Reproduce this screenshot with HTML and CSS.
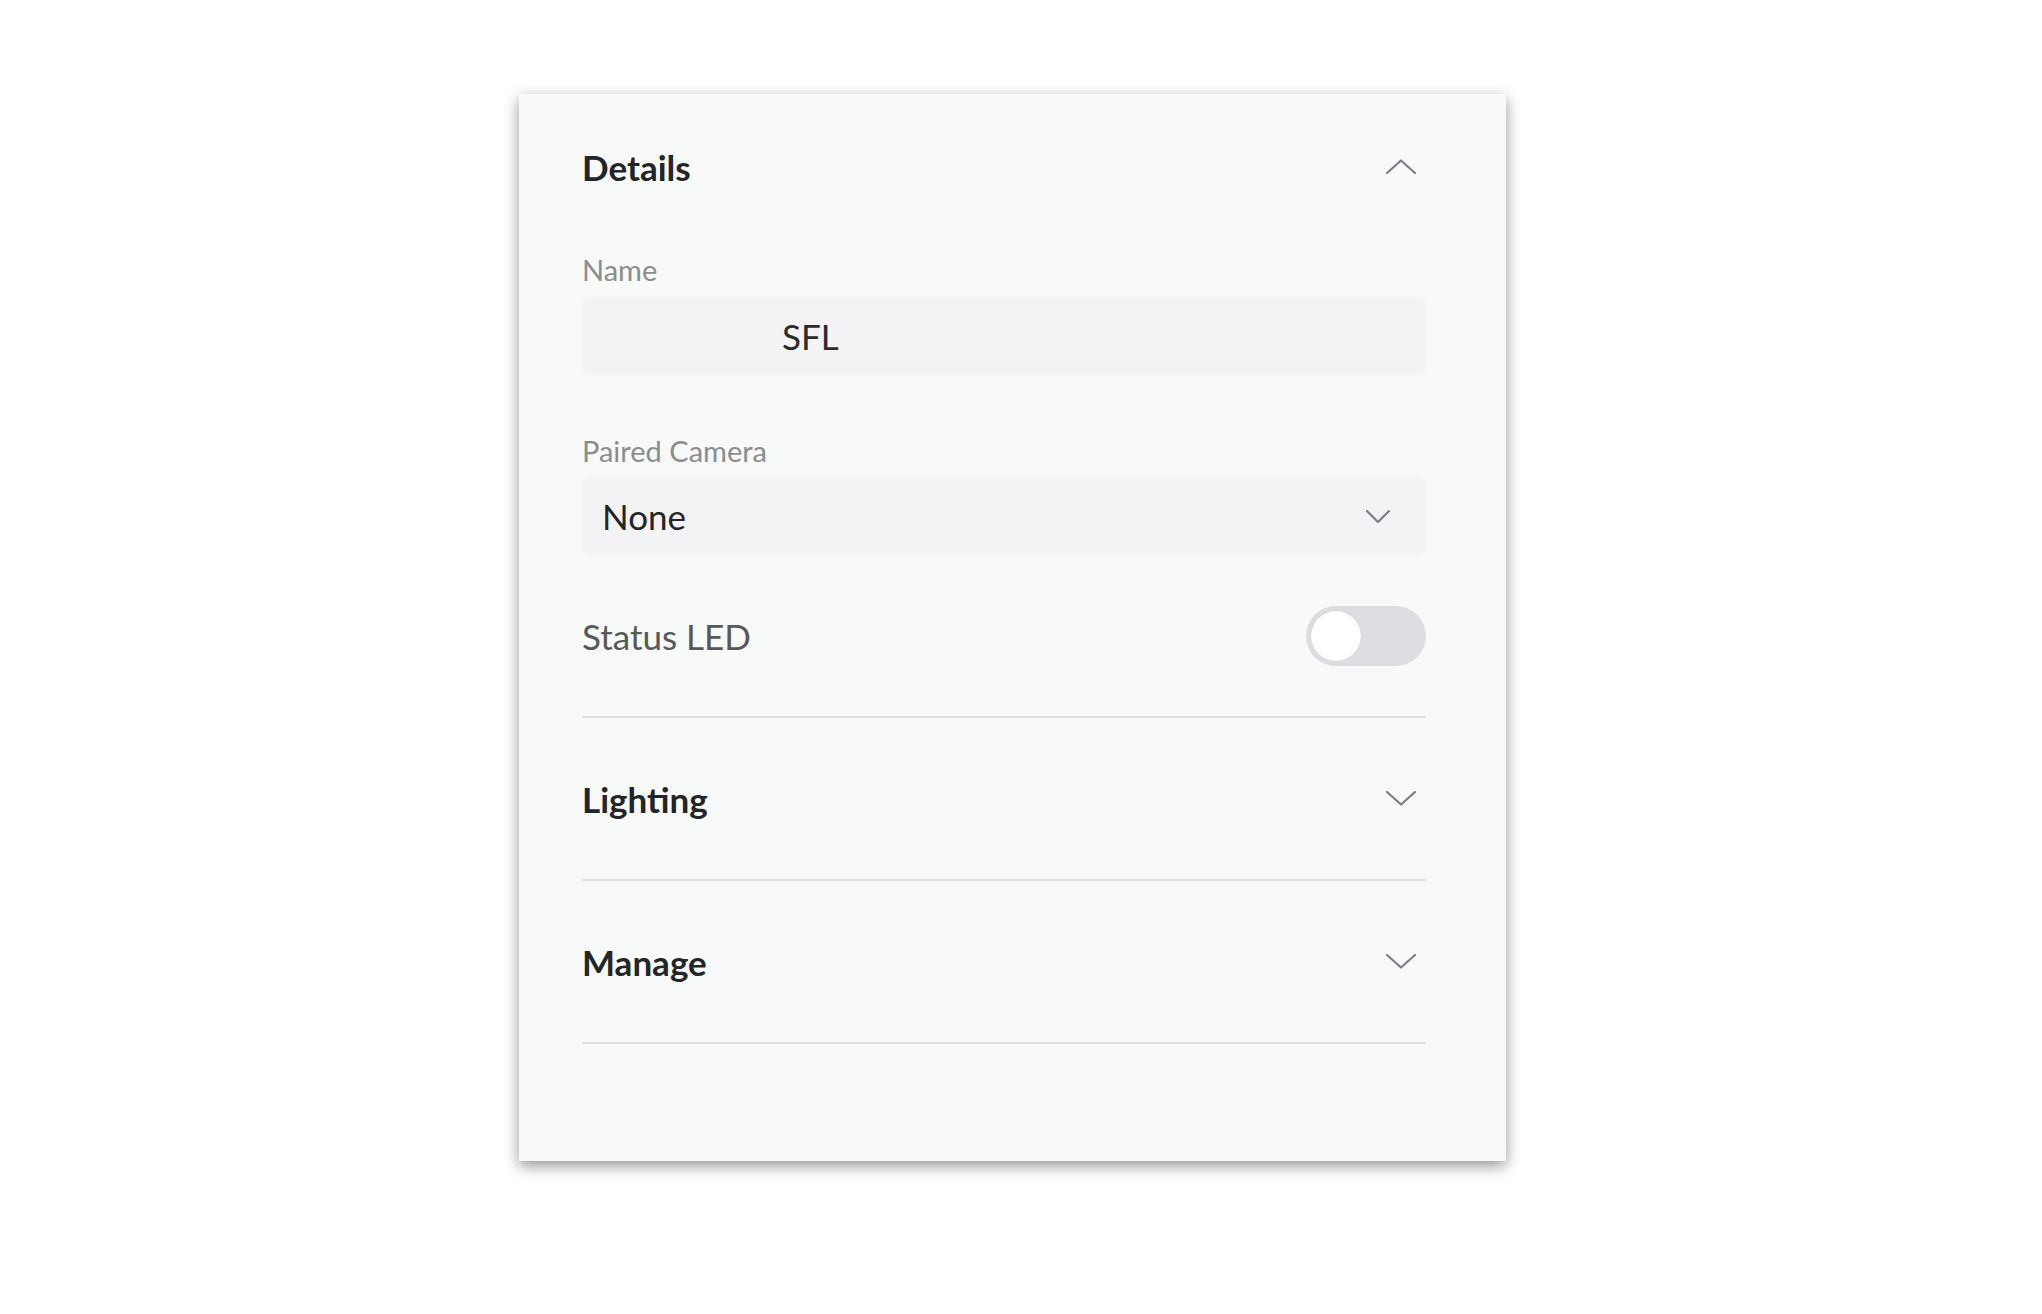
FILE: index.html
```html
<!DOCTYPE html>
<html lang="en">
<head>
  <meta charset="UTF-8">
  <title>Device Settings</title>
  <link rel="stylesheet" href="styles.css">
</head>
<body>

<div class="panel">
  <div class="section open">
    <div class="section-header details-header">
      <span class="section-title">Details</span>
      <svg class="chevron" width="30" height="15" viewBox="0 0 30 15">
        <polyline points="1,14 15,1.5 29,14" />
      </svg>
    </div>

    <label class="field-label">Name</label>
    <div class="input">SFL</div>

    <label class="field-label camera-label">Paired Camera</label>
    <div class="select">
      <span>None</span>
      <svg class="select-chevron" width="24" height="13" viewBox="0 0 24 13">
        <polyline points="1,1 12,12 23,1" />
      </svg>
    </div>

    <div class="toggle-row">
      <span class="toggle-label">Status LED</span>
      <div class="toggle"><div class="knob"></div></div>
    </div>
  </div>

  <div class="section">
    <div class="section-header">
      <span class="section-title">Lighting</span>
      <svg class="chevron" width="30" height="15" viewBox="0 0 30 15">
        <polyline points="1,1 15,13.5 29,1" />
      </svg>
    </div>
  </div>

  <div class="section">
    <div class="section-header">
      <span class="section-title">Manage</span>
      <svg class="chevron" width="30" height="15" viewBox="0 0 30 15">
        <polyline points="1,1 15,13.5 29,1" />
      </svg>
    </div>
  </div>
</div>

</body>
</html>
```

FILE: styles.css
```css
html,
body {
  min-height: 100%;
}

body {
  margin: 0;
  min-height: 1314px;
  box-sizing: border-box;
  background: #ffffff;
  font-family: Lato, "Open Sans", sans-serif;
  padding: 94px 0 0 519px;
}

.panel {
  width: 987px;
  height: 1067px;
  box-sizing: border-box;
  padding: 0 80px 0 63px;
  background-color: #f8f9f9;
  box-shadow: 0 5px 14px rgba(0, 0, 0, 0.42);
}

.section {
  border-bottom: 2px solid #dddee1;
}

.section-header {
  height: 161px;
  display: flex;
  align-items: center;
  justify-content: space-between;
}

.details-header {
  height: 145px;
}

.section-title {
  font-size: 35px;
  font-weight: 700;
  color: #232527;
}

.chevron {
  margin-right: 10px;
}

.chevron polyline,
.select-chevron polyline {
  fill: none;
  stroke: #7b7d86;
  stroke-width: 2.2;
  stroke-linecap: round;
  stroke-linejoin: round;
}

.field-label {
  display: block;
  font-size: 29px;
  color: #8b8c8d;
  margin-top: 13px;
  margin-bottom: 10px;
}

.camera-label {
  margin-top: 58px;
  margin-bottom: 8px;
}

.input {
  height: 78px;
  box-sizing: border-box;
  background-color: #f3f3f5;
  border-radius: 8px;
  padding-left: 200px;
  display: flex;
  align-items: center;
  font-size: 35px;
  color: #2a2b2d;
}

.select {
  height: 80px;
  box-sizing: border-box;
  background-color: #f3f3f5;
  border-radius: 8px;
  padding: 0 36px 0 20px;
  display: flex;
  align-items: center;
  justify-content: space-between;
  font-size: 35px;
  color: #232527;
}

.toggle-row {
  margin-top: 50px;
  padding-bottom: 50px;
  display: flex;
  align-items: center;
  justify-content: space-between;
}

.toggle-label {
  font-size: 35px;
  color: #56585a;
}

.toggle {
  width: 120px;
  height: 60px;
  box-sizing: border-box;
  border-radius: 30px;
  background-color: #dcdde0;
  padding: 5px;
}

.knob {
  width: 50px;
  height: 50px;
  border-radius: 50%;
  background-color: #ffffff;
  box-shadow: 0 0 1px rgba(0, 0, 0, 0.15);
}
```
